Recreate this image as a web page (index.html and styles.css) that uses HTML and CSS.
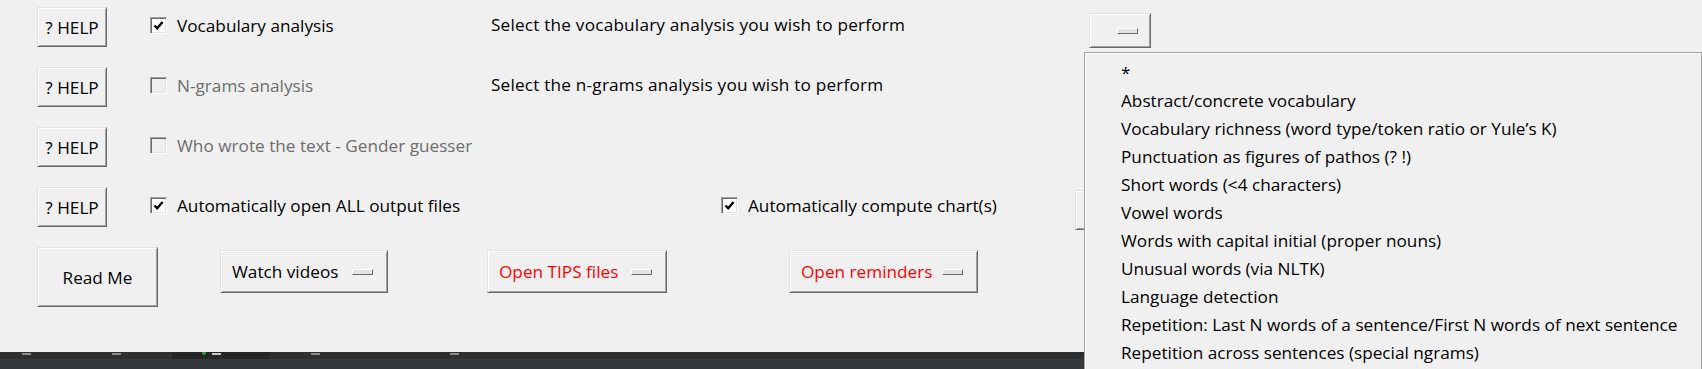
FILE: index.html
```html
<!DOCTYPE HTML>
<html>
<head>
  <link rel="stylesheet" href="styles.css">
  <title>Style analysis</title>
</head>
<body>
<div class="window">
  <div class="row">
    <button type="button" class="btn help">? HELP</button>
    <label class="check col2">
      <span class="box"><svg viewBox="0 0 13 13" width="13" height="13"><path d="M2.5 6.5 L5.2 9.3 L10.6 3" fill="none" stroke="#000" stroke-width="2.4"/></svg></span>
      Vocabulary analysis
    </label>
    <span class="prompt">Select the vocabulary analysis you wish to perform</span>
    <button type="button" class="btn menu picker"><span class="ind"></span></button>
  </div>
  <div class="row">
    <button type="button" class="btn help">? HELP</button>
    <label class="check col2 off">
      <span class="box"></span>
      N-grams analysis
    </label>
    <span class="prompt">Select the n-grams analysis you wish to perform</span>
  </div>
  <div class="row">
    <button type="button" class="btn help">? HELP</button>
    <label class="check col2 off">
      <span class="box"></span>
      Who wrote the text - Gender guesser
    </label>
  </div>
  <div class="row">
    <button type="button" class="btn help">? HELP</button>
    <label class="check wide">
      <span class="box"><svg viewBox="0 0 13 13" width="13" height="13"><path d="M2.5 6.5 L5.2 9.3 L10.6 3" fill="none" stroke="#000" stroke-width="2.4"/></svg></span>
      Automatically open ALL output files
    </label>
    <label class="check chart">
      <span class="box"><svg viewBox="0 0 13 13" width="13" height="13"><path d="M2.5 6.5 L5.2 9.3 L10.6 3" fill="none" stroke="#000" stroke-width="2.4"/></svg></span>
      Automatically compute chart(s)
    </label>
    <button type="button" class="btn hidden-btn"><span class="icon"></span></button>
  </div>
  <div class="row actions">
    <button type="button" class="btn readme">Read Me</button>
    <button type="button" class="btn menu videos">Watch videos<span class="ind"></span></button>
    <button type="button" class="btn menu tips red">Open TIPS files<span class="ind"></span></button>
    <button type="button" class="btn menu reminders red">Open reminders<span class="ind"></span></button>
  </div>
</div>
<div class="taskbar">
  <span class="dash d1"></span>
  <span class="dash d2"></span>
  <span class="active"><span class="dot"></span><span class="dash bright"></span></span>
  <span class="dash d3"></span>
  <span class="dash d4"></span>
</div>
<ul class="popup">
  <li>*</li>
  <li>Abstract/concrete vocabulary</li>
  <li>Vocabulary richness (word type/token ratio or Yule’s K)</li>
  <li>Punctuation as figures of pathos (? !)</li>
  <li>Short words (&lt;4 characters)</li>
  <li>Vowel words</li>
  <li>Words with capital initial (proper nouns)</li>
  <li>Unusual words (via NLTK)</li>
  <li>Language detection</li>
  <li>Repetition: Last N words of a sentence/First N words of next sentence</li>
  <li>Repetition across sentences (special ngrams)</li>
</ul>
</body>
</html>
```

FILE: styles.css
```css
html, body {
  margin: 0;
  padding: 0;
  height: 100%;
  overflow: hidden;
}

body {
  background: #f0f0f0;
  font-family: "Open Sans", "Noto Sans", sans-serif;
  font-size: 17.2px;
  color: #000;
  position: relative;
}

.window {
  height: 352px;
  box-sizing: border-box;
  padding: 7px 0 0 37px;
}

.row {
  display: flex;
  align-items: center;
  height: 40px;
  margin-bottom: 20px;
}

.btn {
  font-family: inherit;
  font-size: inherit;
  color: #000;
  background: #f0f0f0;
  border: 1px solid;
  border-color: #e3e3e3 #696969 #696969 #e3e3e3;
  box-shadow: inset 1px 1px #fff, inset -1px -1px #a0a0a0;
  padding: 0;
  margin: 0;
  flex: none;
  box-sizing: border-box;
}

.help {
  width: 70px;
  height: 40px;
}

.check {
  display: flex;
  align-items: center;
  flex: none;
  margin-bottom: 3px;
  white-space: nowrap;
}

.check .box {
  width: 17px;
  height: 17px;
  box-sizing: border-box;
  border: 1px solid;
  border-color: #a0a0a0 #fff #fff #a0a0a0;
  box-shadow: inset 1px 1px #696969, inset -1px -1px #e3e3e3;
  background: #fff;
  margin-right: 10px;
  display: flex;
  align-items: center;
  justify-content: center;
}

.check.off {
  color: #6d6d6d;
}

.check.off .box {
  background: #f0f0f0;
}

.col2 {
  margin-left: 43px;
  width: 341px;
}

.wide {
  margin-left: 43px;
  width: 571px;
}

.chart {
  width: 354px;
}

.prompt {
  width: 598px;
  flex: none;
  margin-bottom: 6px;
  letter-spacing: 0.2px;
  white-space: nowrap;
}

.menu {
  display: flex;
  align-items: center;
  justify-content: space-between;
  padding: 0 14px 0 11px;
}

.ind {
  width: 21px;
  height: 6px;
  box-sizing: border-box;
  border: 1px solid;
  border-color: #fff #696969 #696969 #fff;
  background: #e3e3e3;
}

.picker {
  width: 62px;
  height: 35px;
  align-self: flex-start;
  margin-top: 6px;
  justify-content: flex-end;
  padding-right: 12px;
}

.hidden-btn {
  width: 100px;
  height: 40px;
  margin-top: 6px;
  padding-left: 10px;
  display: flex;
  align-items: center;
}

.hidden-btn .icon {
  width: 3px;
  height: 14px;
  background: #e6d67e;
}

.actions {
  align-items: flex-start;
}

.readme {
  width: 121px;
  height: 60px;
}

.videos,
.tips,
.reminders {
  height: 43px;
  margin-top: 3px;
}

.videos {
  width: 168px;
  margin-left: 62px;
}

.tips {
  width: 180px;
  margin-left: 99px;
}

.reminders {
  width: 189px;
  margin-left: 122px;
}

.red {
  color: #ff0000;
}

.taskbar {
  height: 17px;
  display: flex;
  align-items: flex-start;
  background: linear-gradient(#2e2f30 0, #2f3031 7px, #3a3c3e 7px, #35383a 8px, #35383a 100%);
}

.dash {
  height: 2px;
  width: 9px;
  background: #8a8c8e;
  margin-top: 1px;
}

.d1 { margin-left: 22px; }
.d2 { margin-left: 81px; }
.d3 { margin-left: 42px; }
.d4 { margin-left: 130px; }

.active {
  display: flex;
  align-items: flex-start;
  width: 97px;
  height: 7px;
  margin-left: 51px;
  background: #262626;
}

.active .dot {
  width: 4px;
  height: 3px;
  margin-left: 30px;
  background: #2a9d3a;
  border-radius: 0 0 2px 2px;
}

.active .bright {
  margin-left: 6px;
  background: #c8c8c8;
}

.popup {
  position: absolute;
  left: 1084px;
  top: 52px;
  width: 618px;
  height: 340px;
  margin: 0;
  padding: 6px 0 0 36px;
  box-sizing: border-box;
  list-style: none;
  background: #f0f0f0;
  border: 1px solid #a0a0a0;
  box-shadow: inset 1px 1px #fff;
}

.popup li {
  height: 28px;
  line-height: 28px;
  white-space: nowrap;
}
```
